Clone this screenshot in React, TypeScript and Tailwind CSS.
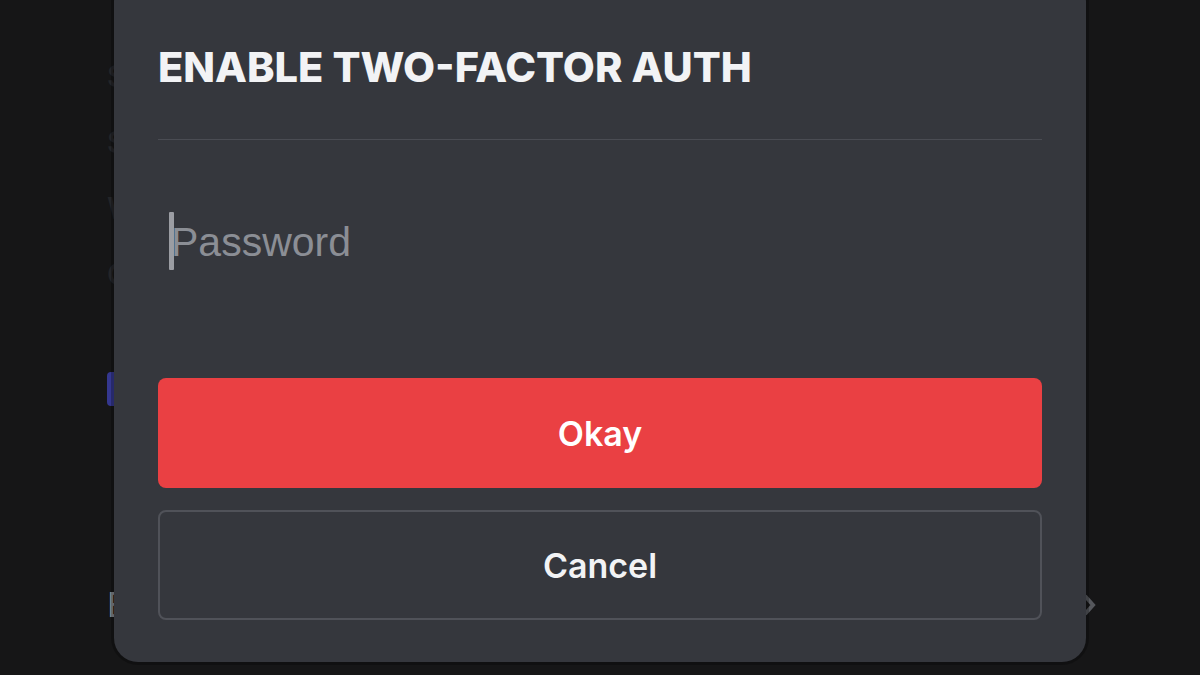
import React from "react";

export default function App() {
    return (
        <div className="relative h-[675px] w-[1200px] overflow-hidden bg-[#161617] font-['Inter',sans-serif]">
            {/* page behind the dialog, mostly hidden */}
            <div className="flex flex-col pl-[107px] pr-[104px] pt-[58px]">
                <div className="grid gap-[30px] text-[30px] font-semibold leading-[36px] text-[#242528]">
                    <span>Se</span>
                    <span>Se</span>
                    <span>Wi</span>
                    <span>Of</span>
                </div>
                <div className="mt-[80px] h-[34px] w-[220px] rounded-[4px] bg-[#34378f]" />
                <div className="mt-[182px] flex items-center justify-between">
                    <span className="text-[34px] leading-[34px] text-[#85878c]">E</span>
                    <svg width="14" height="22" viewBox="0 0 14 22" className="text-[#55575c]">
                        <path d="M3 2 L11 11 L3 20" fill="none" stroke="currentColor" strokeWidth="4" />
                    </svg>
                </div>
            </div>

            {/* dialog */}
            <div className="absolute left-[114px] top-[-22px] flex h-[684px] w-[972px] flex-col rounded-[24px] bg-[#35373d] px-[44px] pt-[63px] shadow-[0_0_0_3px_rgba(0,0,0,0.25)]">
                <h1 className="text-[41.5px] font-extrabold leading-[52px] text-[#f2f3f5] uppercase">
                    Enable Two-Factor Auth
                </h1>
                <div className="mt-[46px] h-px w-full bg-[#4a4c53]" />
                <div className="mt-[72px] flex h-[58px] items-center pl-[11px]">
                    <span className="h-[58px] w-[5px] rounded-[1px] bg-[#9b9da3]" />
                    <input
                        placeholder="Password"
                        className="ml-[-3px] mt-[3px] w-full bg-transparent font-['Liberation_Sans',sans-serif] text-[41px] text-[#dbdee1] outline-none placeholder:text-[#8b8e95]"
                    />
                </div>
                <button className="mt-[108px] h-[110px] w-full rounded-[8px] bg-[#ea4043] text-[34px] font-semibold text-white">
                    Okay
                </button>
                <button className="mt-[22px] h-[110px] w-full rounded-[8px] border-2 border-[#505259] text-[34px] font-semibold text-[#f2f3f5]">
                    Cancel
                </button>
            </div>
        </div>
    );
}
